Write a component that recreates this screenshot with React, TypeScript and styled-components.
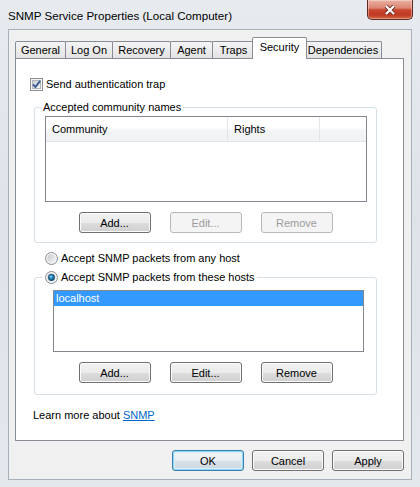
import React from "react";
import styled, { createGlobalStyle, css } from "styled-components";

const GlobalStyle = createGlobalStyle`
  html, body { margin: 0; padding: 0; background: #ffffff; }
  body { font-family: "Liberation Sans", Arial, sans-serif; font-size: 11px; color: #000; }
  * { box-sizing: border-box; }
`;

const Window = styled.div`
  width: 420px;
  height: 487px;
  display: flex;
  flex-direction: column;
  padding: 0 8px 7px 8px;
  background: linear-gradient(180deg, #e7ebf0 0%, #dde3e9 45%, #e3e8ed 100%);
  overflow: hidden;
`;

const TitleBar = styled.div`
  flex: none;
  height: 29px;
  display: flex;
  align-items: flex-start;
`;

const TitleText = styled.div`
  margin-top: 9px;
  font-size: 11.6px;
  line-height: 14px;
  white-space: nowrap;
  color: #000;
`;

const CloseButton = styled.div`
  width: 46px;
  height: 20px;
  margin-left: auto;
  margin-right: -1px;
  border: 1px solid #5e2a22;
  border-top: none;
  border-radius: 0 0 5px 5px;
  background: linear-gradient(180deg, #eab0a2 0%, #dd8672 42%, #c8472f 52%, #c03a23 78%, #d2633f 100%);
  box-shadow: inset 0 0 0 1px rgba(255, 255, 255, 0.35);
  display: flex;
  align-items: center;
  justify-content: center;
`;

const Client = styled.div`
  flex: 1;
  display: flex;
  flex-direction: column;
  background: #f0f0f0;
  border: 1px solid #a7b0b9;
  padding: 7px 7px 0 6px;
`;

const TabStrip = styled.div`
  flex: none;
  height: 21px;
  display: flex;
  align-items: flex-end;
`;

const Tab = styled.div<{ $w: number; $active?: boolean }>`
  width: ${(p) => p.$w}px;
  height: 17px;
  margin-left: -1px;
  &:first-child {
    margin-left: 0;
  }
  border: 1px solid #898c95;
  border-bottom: none;
  border-radius: 2px 2px 0 0;
  background: linear-gradient(180deg, #f4f4f4 0%, #ececec 50%, #e2e2e2 100%);
  display: flex;
  align-items: center;
  justify-content: center;
  font-size: 11px;
  line-height: 13px;
  white-space: nowrap;
  ${(p) =>
    p.$active &&
    css`
      height: 22px;
      margin: 0 -2px -1px -3px;
      padding-bottom: 2px;
      position: relative;
      z-index: 2;
      background: #ffffff;
    `}
`;

const Panel = styled.div`
  flex: none;
  height: 383px;
  border: 1px solid #898c95;
  background: #ffffff;
  display: flex;
  flex-direction: column;
`;

const OptionRow = styled.label<{ $top: number; $left: number }>`
  display: flex;
  align-items: center;
  gap: 3px;
  height: 13px;
  line-height: 13px;
  margin: ${(p) => p.$top}px 0 0 ${(p) => p.$left}px;
  white-space: nowrap;
`;

const GroupBox = styled.fieldset<{ $top: number }>`
  margin: ${(p) => p.$top}px 26px 0 18px;
  padding: 0;
  border: 1px solid #d5dfe5;
  border-radius: 3px;
  min-width: 0;
  display: flex;
  flex-direction: column;
`;

const Legend = styled.legend<{ $indent: number }>`
  margin-left: ${(p) => p.$indent}px;
  padding: 0 2px;
  line-height: 13px;
  height: 13px;
  font-size: 11px;
`;

const ListView = styled.div`
  height: 86px;
  margin: 2px 9px 0 10px;
  border: 1px solid #828790;
  background: #ffffff;
`;

const HeaderRow = styled.div`
  display: flex;
  height: 25px;
  border-bottom: 1px solid #e2e3e6;
  background: linear-gradient(180deg, #ffffff 0%, #ffffff 45%, #f3f4f6 55%, #f1f2f4 100%);
`;

const HeaderCell = styled.div<{ $w?: number; $last?: boolean }>`
  ${(p) => (p.$w ? `width: ${p.$w}px; flex: none;` : "flex: 1;")}
  padding-left: 6px;
  display: flex;
  align-items: center;
  border-right: ${(p) => (p.$last ? "none" : "1px solid #e3e5e8")};
`;

const ListBox = styled.div`
  height: 62px;
  margin: 6px 12px 0 18px;
  border: 1px solid #828790;
  background: #ffffff;
`;

const ListItem = styled.div<{ $selected?: boolean }>`
  height: 15px;
  line-height: 15px;
  padding-left: 2px;
  ${(p) =>
    p.$selected &&
    css`
      background: #3399ff;
      color: #ffffff;
    `}
`;

const ButtonRow = styled.div<{ $top: number; $bottom: number }>`
  display: flex;
  justify-content: center;
  gap: 19px;
  margin: ${(p) => p.$top}px 0 ${(p) => p.$bottom}px 0;
`;

const Button = styled.button<{ $default?: boolean }>`
  width: 72px;
  height: 21px;
  padding: 0;
  font-family: "Liberation Sans", Arial, sans-serif;
  font-size: 11px;
  color: #000;
  border: 1px solid #707070;
  border-radius: 3px;
  background: linear-gradient(180deg, #f2f2f2 0%, #ebebeb 50%, #dddddd 51%, #cfcfcf 100%);
  box-shadow: inset 0 0 0 1px #fbfbfb;
  &:disabled {
    color: #9c9c9c;
    border-color: #b5b9bc;
    background: #f4f4f4;
    box-shadow: none;
  }
  ${(p) =>
    p.$default &&
    css`
      border-color: #3c7fb1;
      box-shadow: inset 0 0 0 1px #8fd6f4, inset 0 0 0 2px #d4effb;
      background: linear-gradient(180deg, #f1f5f8 0%, #e9eef2 50%, #d9e1e8 51%, #cdd7df 100%);
    `}
`;

const LearnRow = styled.div`
  margin: 14px 0 0 17px;
  line-height: 13px;
`;

const Link = styled.a`
  color: #0066cc;
  text-decoration: underline;
`;

const FooterRow = styled.div`
  display: flex;
  justify-content: flex-end;
  gap: 8px;
  margin-top: 9px;
`;

const CheckIcon = () => (
  <svg width="13" height="13" viewBox="0 0 13 13">
    <defs>
      <linearGradient id="cbg" x1="0" y1="0" x2="1" y2="1">
        <stop offset="0" stopColor="#c6ccd3" />
        <stop offset="1" stopColor="#f6f7f8" />
      </linearGradient>
    </defs>
    <rect x="0.5" y="0.5" width="12" height="12" fill="#f5f5f5" stroke="#8e8f8f" />
    <rect x="2.5" y="2.5" width="8" height="8" fill="url(#cbg)" stroke="#b0b6bc" />
    <path d="M3 6.3 L5.4 9 L10.2 2.8" stroke="#3f5a94" strokeWidth="1.9" fill="none" />
  </svg>
);

const RadioIcon = ({ checked }: { checked?: boolean }) => (
  <svg width="13" height="13" viewBox="0 0 13 13">
    <defs>
      <linearGradient id="rbg" x1="0" y1="0" x2="1" y2="1">
        <stop offset="0" stopColor="#c3c8ce" />
        <stop offset="1" stopColor="#f7f7f7" />
      </linearGradient>
      <radialGradient id="rdot" cx="0.5" cy="0.5" r="0.5" fx="0.38" fy="0.32">
        <stop offset="0" stopColor="#9fe6fb" />
        <stop offset="0.45" stopColor="#2b8ec4" />
        <stop offset="1" stopColor="#0d3d66" />
      </radialGradient>
    </defs>
    <circle cx="6.5" cy="6.5" r="6" fill="#f4f4f4" stroke="#8a8d90" />
    <circle cx="6.5" cy="6.5" r="4.3" fill="url(#rbg)" />
    {checked && <circle cx="6.5" cy="6.5" r="3.4" fill="url(#rdot)" />}
  </svg>
);

const CloseGlyph = () => (
  <svg width="12" height="10" viewBox="0 0 12 10">
    <path d="M2 1 L10 9 M10 1 L2 9" stroke="#6b2c22" strokeWidth="4" />
    <path d="M2 1 L10 9 M10 1 L2 9" stroke="#ffffff" strokeWidth="2.3" />
  </svg>
);

const tabs = [
  { label: "General", w: 51 },
  { label: "Log On", w: 48 },
  { label: "Recovery", w: 59 },
  { label: "Agent", w: 43 },
  { label: "Traps", w: 43 },
  { label: "Security", w: 55, active: true },
  { label: "Dependencies", w: 78 },
];

export default function App() {
  return (
    <>
      <GlobalStyle />
      <Window>
        <TitleBar>
          <TitleText>SNMP Service Properties (Local Computer)</TitleText>
          <CloseButton>
            <CloseGlyph />
          </CloseButton>
        </TitleBar>
        <Client>
          <TabStrip>
            {tabs.map((t) => (
              <Tab key={t.label} $w={t.w} $active={t.active}>
                {t.label}
              </Tab>
            ))}
          </TabStrip>
          <Panel>
            <OptionRow $top={19} $left={14}>
              <CheckIcon />
              <span>Send authentication trap</span>
            </OptionRow>
            <GroupBox $top={10}>
              <Legend $indent={6}>Accepted community names</Legend>
              <ListView>
                <HeaderRow>
                  <HeaderCell $w={182}>Community</HeaderCell>
                  <HeaderCell $w={92}>Rights</HeaderCell>
                  <HeaderCell $last />
                </HeaderRow>
              </ListView>
              <ButtonRow $top={10} $bottom={9}>
                <Button>Add...</Button>
                <Button disabled>Edit...</Button>
                <Button disabled>Remove</Button>
              </ButtonRow>
            </GroupBox>
            <OptionRow $top={9} $left={29}>
              <RadioIcon />
              <span>Accept SNMP packets from any host</span>
            </OptionRow>
            <GroupBox $top={6}>
              <Legend $indent={8}>
                <OptionRow $top={0} $left={0}>
                  <RadioIcon checked />
                  <span>Accept SNMP packets from these hosts</span>
                </OptionRow>
              </Legend>
              <ListBox>
                <ListItem $selected>localhost</ListItem>
              </ListBox>
              <ButtonRow $top={10} $bottom={11}>
                <Button>Add...</Button>
                <Button>Edit...</Button>
                <Button>Remove</Button>
              </ButtonRow>
            </GroupBox>
            <LearnRow>
              Learn more about <Link href="#">SNMP</Link>
            </LearnRow>
          </Panel>
          <FooterRow>
            <Button $default>OK</Button>
            <Button>Cancel</Button>
            <Button>Apply</Button>
          </FooterRow>
        </Client>
      </Window>
    </>
  );
}
